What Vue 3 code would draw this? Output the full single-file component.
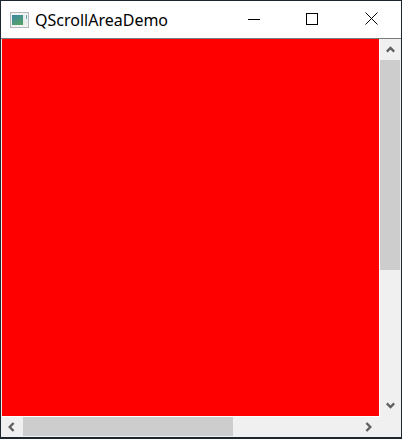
<template>
  <div class="window">
    <div class="titlebar">
      <svg class="app-icon" width="20" height="16" viewBox="0 0 20 16">
        <defs>
          <linearGradient id="pane" x1="0" y1="0" x2="0.5" y2="1">
            <stop offset="0" stop-color="#3b86a8" />
            <stop offset="1" stop-color="#55a06a" />
          </linearGradient>
        </defs>
        <rect x="0.5" y="0.5" width="18" height="15" fill="#f2f4f4" stroke="#b4b8ba" />
        <rect x="2" y="3" width="11" height="10" fill="url(#pane)" />
        <rect x="13" y="3" width="2" height="10" fill="#e4ecea" />
        <rect x="16" y="3" width="1" height="4" fill="#6aa6b4" />
        <rect x="16" y="7" width="1" height="6" fill="#dfe8e4" />
      </svg>
      <span class="title">QScrollAreaDemo</span>
      <div class="controls">
        <button type="button" class="ctl" aria-label="Minimize">
          <svg width="12" height="12" viewBox="0 0 12 12"><path d="M0 6.5h12" stroke="#000" fill="none" /></svg>
        </button>
        <button type="button" class="ctl" aria-label="Maximize">
          <svg width="12" height="12" viewBox="0 0 12 12"><rect x="0.5" y="0.5" width="11" height="11" stroke="#000" fill="none" /></svg>
        </button>
        <button type="button" class="ctl ctl-close" aria-label="Close">
          <svg width="13" height="13" viewBox="0 0 13 13"><path d="M0.5 0.5l12 12M12.5 0.5l-12 12" stroke="#000" fill="none" /></svg>
        </button>
      </div>
    </div>

    <div class="area">
      <div class="viewport"></div>

      <div class="vbar">
        <button type="button" class="arrow arrow-v" aria-label="Up">
          <svg width="9" height="7" viewBox="0 0 9 7"><path d="M0.8 5.6L4.5 1.9l3.7 3.7" stroke="#606060" stroke-width="2.4" fill="none" /></svg>
        </button>
        <div class="vtrack"><div class="vthumb"></div></div>
        <button type="button" class="arrow arrow-v" aria-label="Down">
          <svg width="9" height="7" viewBox="0 0 9 7"><path d="M0.8 1.4L4.5 5.1l3.7-3.7" stroke="#606060" stroke-width="2.4" fill="none" /></svg>
        </button>
      </div>

      <div class="hbar">
        <button type="button" class="arrow arrow-left" aria-label="Left">
          <svg width="7" height="10" viewBox="0 0 7 10"><path d="M5.6 1L1.7 5l3.9 4" stroke="#606060" stroke-width="2.4" fill="none" /></svg>
        </button>
        <div class="htrack"><div class="hthumb"></div></div>
        <button type="button" class="arrow" aria-label="Right">
          <svg width="7" height="10" viewBox="0 0 7 10"><path d="M1.4 1l3.9 4-3.9 4" stroke="#606060" stroke-width="2.4" fill="none" /></svg>
        </button>
      </div>

      <div class="corner"></div>
    </div>
  </div>
</template>

<script setup>
</script>

<style scoped>
.window {
  width: 402px;
  height: 439px;
  box-sizing: border-box;
  display: flex;
  flex-direction: column;
  border: 1px solid #1d2730;
  border-bottom-width: 2px;
  background: #fff;
  font-family: "Noto Sans", "Liberation Sans", sans-serif;
}

.titlebar {
  height: 38px;
  flex: none;
  display: flex;
  align-items: center;
  padding-left: 9px;
  border-bottom: 1px solid #767b7d;
  box-sizing: border-box;
}

.app-icon {
  flex: none;
}

.title {
  margin-left: 5px;
  font-size: 16px;
  color: #000;
  white-space: nowrap;
}

.controls {
  margin-left: auto;
  display: flex;
  margin-top: -2px;
}

.ctl {
  width: 58px;
  height: 37px;
  padding: 0;
  border: 0;
  background: none;
  display: flex;
  align-items: center;
  justify-content: center;
}

.ctl-close {
  width: 59px;
  margin-left: 1px;
}

.area {
  flex: 1;
  min-height: 0;
  display: grid;
  grid-template-columns: 1fr 21px;
  grid-template-rows: 1fr 21px;
  padding: 0 1px;
  background: #f0f0f0;
}

.viewport {
  background: #ff0000;
  border-right: 1px solid #fff;
  border-bottom: 1px solid #fff;
  margin-right: -1px;
  margin-bottom: -1px;
}

.vbar,
.hbar,
.corner {
  background: #f0f0f0;
}

.vbar {
  display: flex;
  flex-direction: column;
  margin-left: 1px;
}

.hbar {
  display: flex;
  margin-top: 1px;
  padding-bottom: 1px;
}

.corner {
  margin: 1px 0 0 1px;
}

.arrow {
  flex: none;
  width: 21px;
  padding: 0;
  border: 0;
  background: none;
  display: flex;
  align-items: center;
  justify-content: center;
}

.arrow-v {
  width: 20px;
  height: 21px;
}

.arrow-left {
  padding-right: 2px;
}

.vtrack,
.htrack {
  flex: 1;
  min-width: 0;
  min-height: 0;
}

.vthumb {
  height: 210px;
  background: #cdcdcd;
}

.hthumb {
  width: 210px;
  height: 100%;
  background: #cdcdcd;
}

button {
  cursor: default;
}
</style>
